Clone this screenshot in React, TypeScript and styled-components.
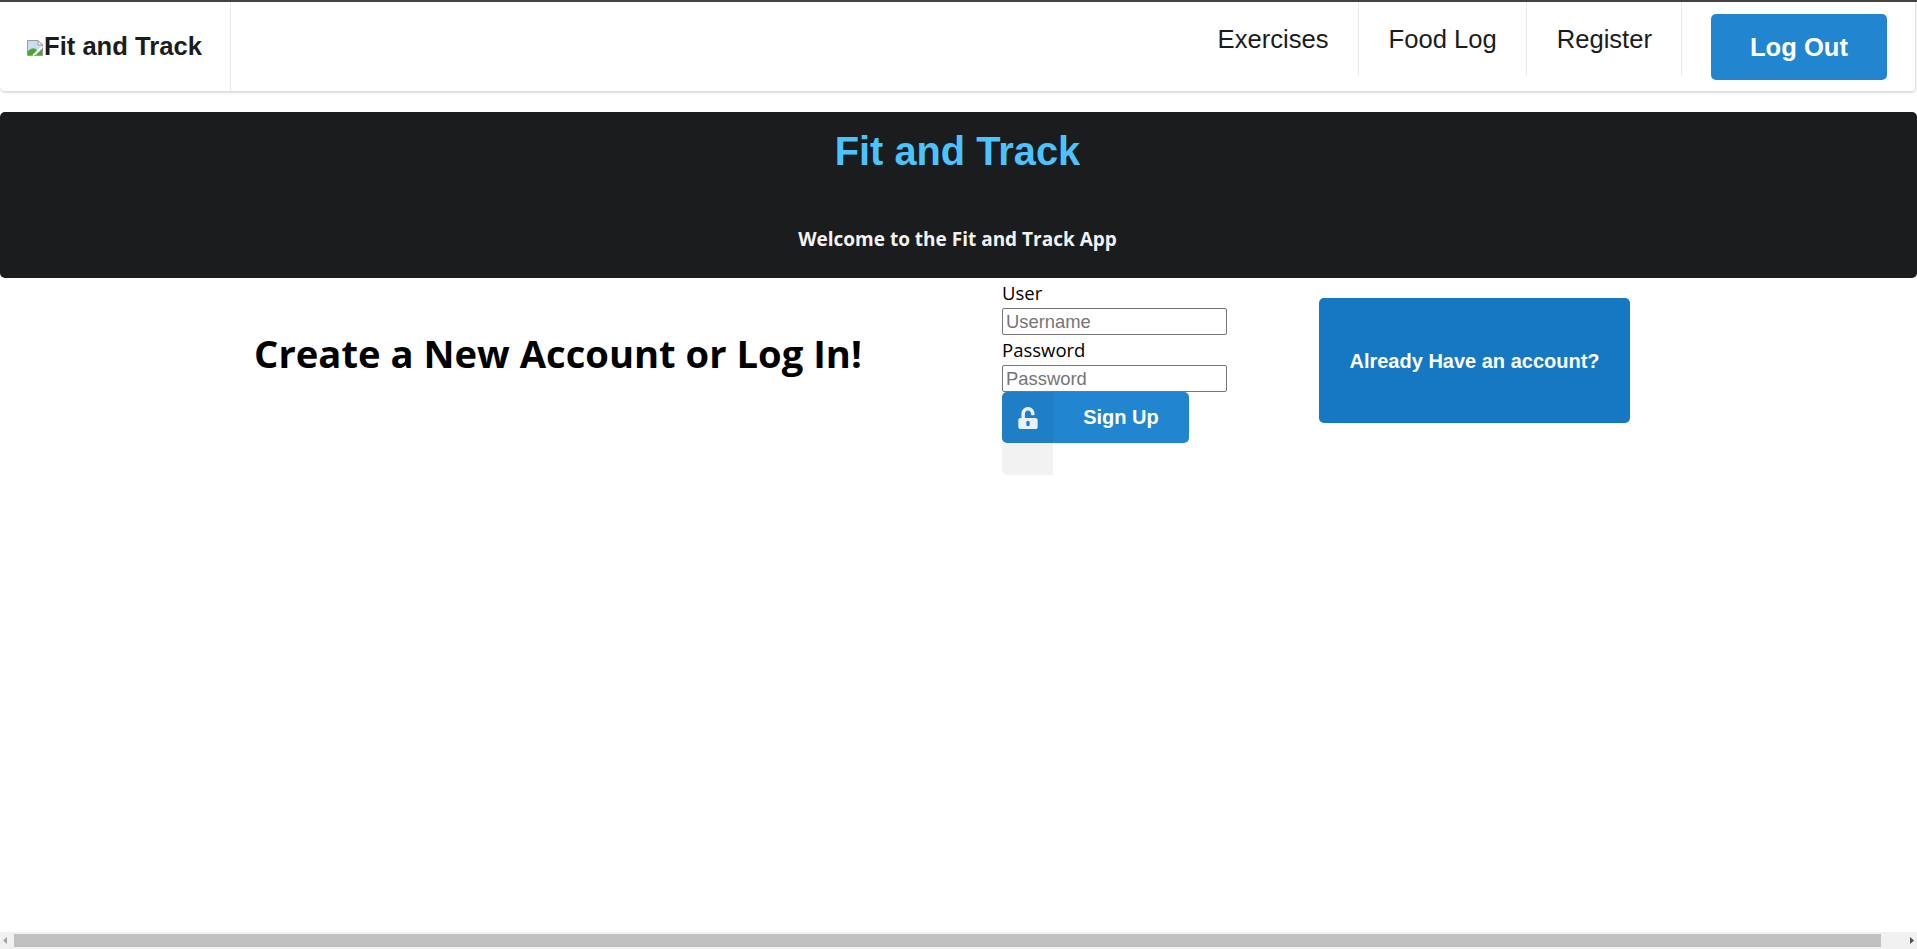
import * as React from 'react';
import styled, { createGlobalStyle } from 'styled-components';
import { FaUnlockAlt } from 'react-icons/fa';

const GlobalStyle = createGlobalStyle`
  html, body {
    margin: 0;
    padding: 0;
    height: 100%;
    overflow: hidden;
    background: #fff;
  }
  * {
    box-sizing: border-box;
  }
`;

const Page = styled.div`
  display: flex;
  flex-direction: column;
  height: 949px;
  border-top: 2px solid #444;
  font-family: 'Open Sans', sans-serif;
  color: #000;
`;

const Menu = styled.nav`
  display: flex;
  align-items: flex-start;
  height: 90px;
  margin-right: 1px;
  background: #fff;
  border: 1px solid rgba(34, 36, 38, 0.15);
  border-top: 0;
  border-left: 0;
  border-radius: 0 0 5px 5px;
  box-shadow: 0 1px 2px 0 rgba(34, 36, 38, 0.15);
  font-family: 'Liberation Sans', Arial, sans-serif;
  font-size: 25.6px;
  color: #1b1c1d;
`;

const Logo = styled.a`
  display: flex;
  align-items: center;
  align-self: stretch;
  width: 231px;
  padding: 0 0 1px 27px;
  border-right: 1px solid rgba(34, 36, 38, 0.1);
  font-weight: 700;
`;

const BrokenImage = styled.svg`
  flex: none;
  width: 16px;
  height: 16px;
  margin: 4px 1px 0 0;
`;

const MenuRight = styled.div`
  display: flex;
  align-items: flex-start;
  margin-left: auto;
`;

const MenuItem = styled.a`
  display: flex;
  align-items: center;
  height: 74px;
  padding: 1px 29px 0 30px;
  border-right: 1px solid rgba(34, 36, 38, 0.1);
`;

const LogOut = styled.button`
  width: 176px;
  height: 66px;
  margin: 12px 28px 0 29px;
  padding: 0;
  border: 0;
  border-radius: 5px;
  background: #2185d0;
  color: #fff;
  font-family: inherit;
  font-size: 25.6px;
  font-weight: 700;
`;

const Banner = styled.header`
  display: flex;
  flex-direction: column;
  align-items: center;
  height: 166px;
  margin-top: 20px;
  padding-right: 2px;
  border-radius: 5px;
  background: #1b1c1d;
`;

const BannerTitle = styled.h1`
  margin: 14px 0 0;
  font-family: 'Liberation Sans', Arial, sans-serif;
  font-size: 39.8px;
  line-height: 50px;
  font-weight: 700;
  color: #4cc3ff;
`;

const BannerText = styled.p`
  margin: 50px 0 0;
  font-size: 19px;
  line-height: 26px;
  font-weight: 700;
  color: #f2f2f2;
`;

const Content = styled.main`
  display: grid;
  grid-template-columns: 888px 317px 311px;
  flex: 1;
  padding-left: 114px;
  align-content: start;
`;

const Heading = styled.h2`
  margin: 48px 0 0;
  font-size: 38.2px;
  line-height: 54px;
  font-weight: 700;
  text-align: center;
`;

const Form = styled.form`
  display: flex;
  flex-direction: column;
  align-items: flex-start;
  padding-top: 2px;
`;

const Label = styled.label<{ $spaced?: boolean }>`
  height: ${p => (p.$spaced ? '30px' : '28px')};
  padding-top: ${p => (p.$spaced ? '1px' : '0')};
  font-size: 18.5px;
  line-height: ${p => (p.$spaced ? '27px' : '25px')};
`;

const Input = styled.input`
  width: 225px;
  height: 27px;
  padding: 1px 3px;
  border: 1px solid #767676;
  border-radius: 2px;
  background: #fff;
  font-family: 'Liberation Sans', Arial, sans-serif;
  font-size: 18.4px;
  &::placeholder {
    color: #757575;
    opacity: 1;
  }
`;

const SignUpWrap = styled.div`
  display: flex;
  flex-direction: column;
  width: 187px;
`;

const SignUp = styled.button`
  display: flex;
  align-items: stretch;
  width: 187px;
  height: 51px;
  padding: 0;
  border: 0;
  border-radius: 5px;
  overflow: hidden;
  background: #2185d0;
  color: #fff;
  font-family: 'Liberation Sans', Arial, sans-serif;
  font-size: 20px;
  font-weight: 700;
`;

const SignUpIcon = styled.span`
  display: flex;
  align-items: center;
  justify-content: center;
  width: 51px;
  background: rgba(0, 0, 0, 0.05);
  font-size: 22px;
  svg {
    opacity: 0.9;
  }
`;

const SignUpLabel = styled.span`
  flex: 1;
  line-height: 51px;
  text-align: center;
`;

const IconShadow = styled.div`
  width: 51px;
  height: 32px;
  border-radius: 0 0 0 5px;
  background: #f2f2f2;
`;

const AccountButton = styled.button`
  width: 311px;
  height: 125px;
  margin-top: 20px;
  padding: 2px 0 0;
  border: 0;
  border-radius: 5px;
  background: #1678c2;
  color: #fff;
  font-family: 'Liberation Sans', Arial, sans-serif;
  font-size: 20px;
  font-weight: 700;
`;

const ScrollBar = styled.div`
  display: flex;
  align-items: center;
  flex: none;
  height: 17px;
  background: #f1f1f1;
`;

const ScrollArrow = styled.svg`
  flex: none;
  width: 14px;
  height: 17px;
`;

const ScrollThumb = styled.div`
  flex: 1;
  height: 13px;
  margin-right: 22px;
  background: #c1c1c1;
`;

const App = () => {
  return (
    <Page>
      <GlobalStyle />
      <Menu>
        <Logo>
          <BrokenImage viewBox="0 0 16 16">
            <path d="M0.5 0.5H11L15.5 5V15.5H0.5Z" fill="#c9dcf5" stroke="#9a9a9a" />
            <path d="M11 0.5V5H15.5Z" fill="#fff" stroke="#9a9a9a" />
            <path d="M1 15V11Q6 6 10 10L6 15Z" fill="#4fa52f" />
            <path d="M9 15L15 9V15Z" fill="#4fa52f" />
            <path d="M6 15.5L15.5 6.5" stroke="#fff" strokeWidth="1.4" />
          </BrokenImage>
          <span>Fit and Track</span>
        </Logo>
        <MenuRight>
          <MenuItem>Exercises</MenuItem>
          <MenuItem>Food Log</MenuItem>
          <MenuItem>Register</MenuItem>
          <LogOut>Log Out</LogOut>
        </MenuRight>
      </Menu>
      <Banner>
        <BannerTitle>Fit and Track</BannerTitle>
        <BannerText>Welcome to the Fit and Track App</BannerText>
      </Banner>
      <Content>
        <Heading>Create a New Account or Log In!</Heading>
        <Form>
          <Label>User</Label>
          <Input placeholder="Username" />
          <Label $spaced>Password</Label>
          <Input placeholder="Password" />
          <SignUpWrap>
            <SignUp type="button">
              <SignUpIcon>
                <FaUnlockAlt />
              </SignUpIcon>
              <SignUpLabel>Sign Up</SignUpLabel>
            </SignUp>
            <IconShadow />
          </SignUpWrap>
        </Form>
        <AccountButton>Already Have an account?</AccountButton>
      </Content>
      <ScrollBar>
        <ScrollArrow viewBox="0 0 14 17">
          <path d="M3 8.5L7 5V12Z" fill="#a3a3a3" />
        </ScrollArrow>
        <ScrollThumb />
        <ScrollArrow viewBox="0 0 14 17">
          <path d="M11 8.5L7 5V12Z" fill="#505050" />
        </ScrollArrow>
      </ScrollBar>
    </Page>
  );
};

export default App;
